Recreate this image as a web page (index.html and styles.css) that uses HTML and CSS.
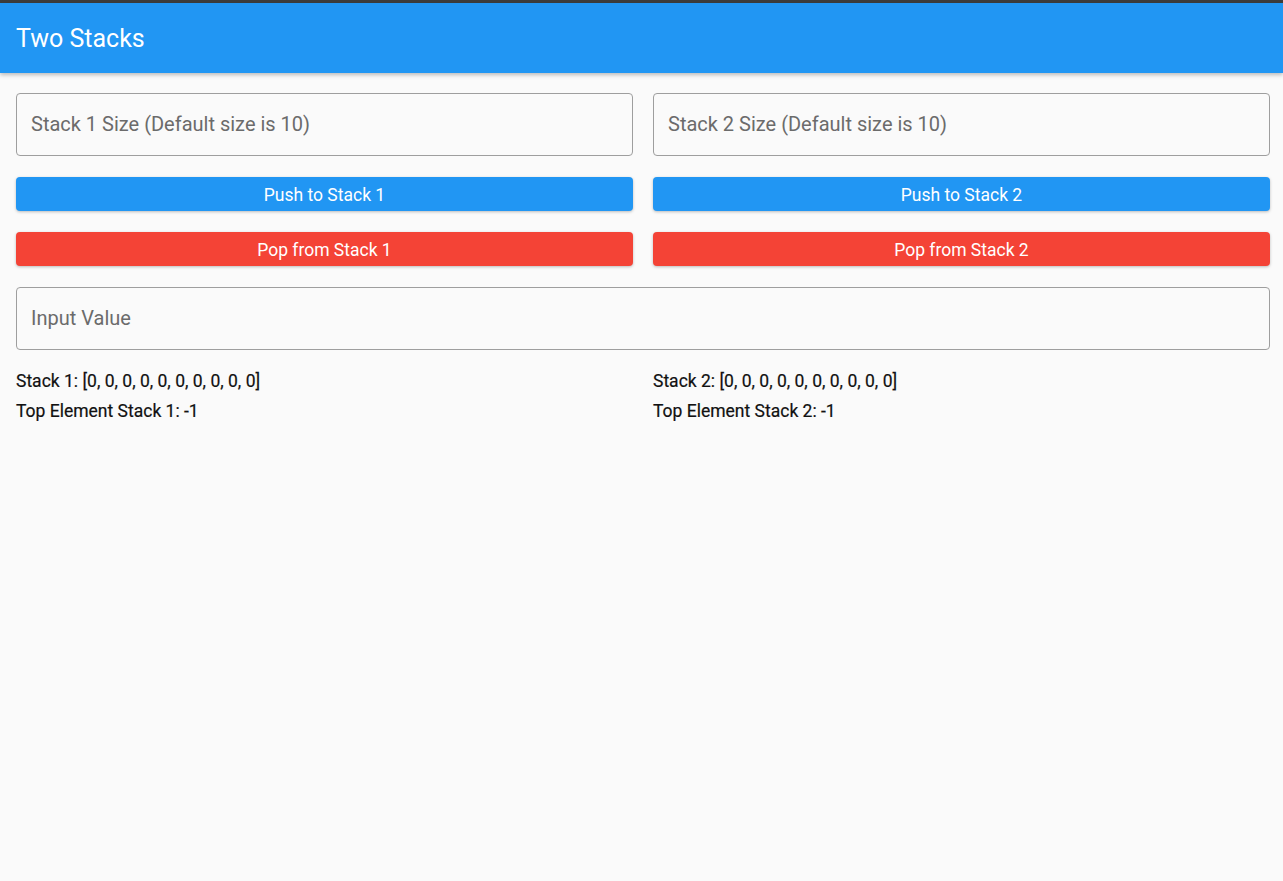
FILE: index.html
```html
<!DOCTYPE html>
<html>
<head>
<meta charset="utf-8">
<link rel="stylesheet" href="styles.css">
</head>
<body>
<div class="topline"></div>
<header class="appbar"><span class="title">Two Stacks</span></header>
<main class="content">
  <div class="grid">
    <div class="field"><span class="ph">Stack 1 Size (Default size is 10)</span></div>
    <div class="field"><span class="ph">Stack 2 Size (Default size is 10)</span></div>
    <button class="btn push">Push to Stack 1</button>
    <button class="btn push">Push to Stack 2</button>
    <button class="btn pop">Pop from Stack 1</button>
    <button class="btn pop">Pop from Stack 2</button>
    <div class="field wide"><span class="ph">Input Value</span></div>
    <div class="info">
      <div class="line">Stack 1: [0, 0, 0, 0, 0, 0, 0, 0, 0, 0]</div>
      <div class="line">Top Element Stack 1: -1</div>
    </div>
    <div class="info">
      <div class="line">Stack 2: [0, 0, 0, 0, 0, 0, 0, 0, 0, 0]</div>
      <div class="line">Top Element Stack 2: -1</div>
    </div>
  </div>
</main>
</body>
</html>
```
FILE: styles.css
```css
html, body {
  margin: 0;
  padding: 0;
  background: #fafafa;
  font-family: Roboto, "Liberation Sans", sans-serif;
  height: 100%;
}
.topline {
  height: 3px;
  background: #3c3c3c;
}
.appbar {
  height: 70px;
  background: #2196f3;
  display: flex;
  align-items: center;
  padding: 0 16px;
  box-shadow: 0 2px 4px rgba(0,0,0,0.25);
  position: relative;
}
.title {
  color: #fff;
  font-size: 25px;
  font-weight: 400;
}
.content {
  padding: 20px 13px 0 16px;
}
.grid {
  display: grid;
  grid-template-columns: 1fr 1fr;
  column-gap: 20px;
  row-gap: 21px;
}
.field {
  height: 61px;
  border: 1px solid #9e9e9e;
  border-radius: 4px;
  display: flex;
  align-items: center;
  padding: 0 14px;
}
.field.wide {
  grid-column: 1 / span 2;
}
.ph {
  color: #6b6b6b;
  font-size: 20px;
  margin-top: -2px;
}
.btn {
  height: 34px;
  border: none;
  border-radius: 4px;
  color: #fff;
  font-family: Roboto, "Liberation Sans", sans-serif;
  font-size: 17.5px;
  box-shadow: 0 1px 3px rgba(0,0,0,0.25);
  padding: 2px 0 0;
}
.push { background: #2196f3; }
.pop { background: #f44336; }
.info {
  margin-top: -5px;
}
.line {
  font-size: 17.5px;
  color: #111;
  line-height: 30px;
  -webkit-text-stroke: 0.2px #111;
}
```
